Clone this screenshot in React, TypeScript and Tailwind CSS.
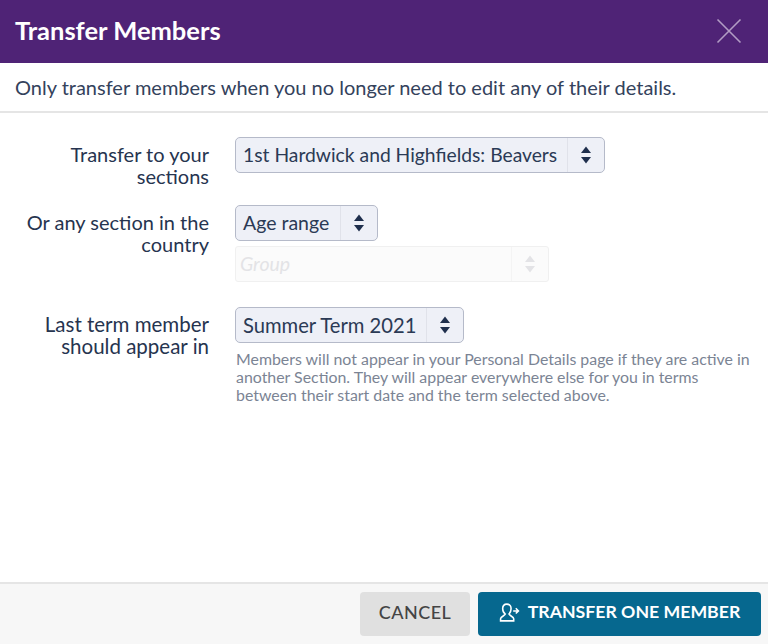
const Arrows = ({ faded }: { faded?: boolean }) => (
  <svg width="12" height="20" viewBox="0 0 12 20" className={faded ? "text-[#e3e3e6]" : "text-[#1f2f4d]"}>
    <path d="M6 1.5 L11 8 H1 Z" fill="currentColor" />
    <path d="M6 18.5 L11 12 H1 Z" fill="currentColor" />
  </svg>
);

interface SelectProps {
  label: string;
  width: string;
  textSize?: string;
}

const Select = ({ label, width, textSize = "text-[19.5px]" }: SelectProps) => (
  <div className={`${width} h-[36px] flex items-center justify-between rounded-[5px] border border-[#b5bac9] bg-[#eef0f7]`}>
    <span className={`pl-[7px] ${textSize} leading-none text-[#2b3a55] whitespace-nowrap`}>{label}</span>
    <div className="w-[37px] h-full flex items-center justify-center border-l border-[#e0e2ea]">
      <Arrows />
    </div>
  </div>
);

const Label = ({ children, textSize = "text-[20px]" }: { children: React.ReactNode; textSize?: string }) => (
  <div className={`w-[209px] shrink-0 pl-[20px] text-right ${textSize} leading-[22px] text-[#26344f]`}>{children}</div>
);

export default function App() {
  return (
    <div className="w-[768px] h-[644px] flex flex-col bg-white font-['Lato','Noto_Sans',sans-serif] overflow-hidden">
      <div className="h-[63px] shrink-0 flex items-center justify-between bg-[#4f2376] pl-[15px] pr-[26px]">
        <h1 className="text-[25.5px] font-bold text-white leading-none -mt-[2px]">Transfer Members</h1>
        <svg width="26" height="26" viewBox="0 0 26 26" className="text-[#b29cc4] -mt-[2px]">
          <path d="M1.5 1.5 L24.5 24.5 M24.5 1.5 L1.5 24.5" stroke="currentColor" strokeWidth="1.6" />
        </svg>
      </div>
      <div className="h-[50px] shrink-0 flex items-center pl-[15px] border-b-2 border-[#e5e5e5] text-[20px] text-[#34425c]">
        Only transfer members when you no longer need to edit any of their details.
      </div>
      <div className="flex-1 pt-[24px]">
        <div className="flex gap-[26px]">
          <div className="pt-[6px]"><Label>Transfer to your sections</Label></div>
          <Select label="1st Hardwick and Highfields: Beavers" width="w-[370px]" textSize="text-[19.3px]" />
        </div>
        <div className="flex gap-[26px] mt-[18px]">
          <div className="pt-[6px]"><Label>Or any section in the country</Label></div>
          <div className="flex flex-col gap-[5px]">
            <Select label="Age range" width="w-[143px]" />
            <div className="w-[314px] h-[36px] flex items-center justify-between rounded-[3px] border border-[#f0f0f0] bg-[#fbfbfb]">
              <span className="pl-[4px] text-[19.5px] italic text-[#e3e3e6]">Group</span>
              <div className="w-[37px] h-full flex items-center justify-center border-l border-[#f4f4f4]">
                <Arrows faded />
              </div>
            </div>
          </div>
        </div>
        <div className="flex gap-[26px] mt-[25px]">
          <div className="pt-[6px]"><Label textSize="text-[20.5px]">Last term member should appear in</Label></div>
          <div className="flex flex-col">
            <Select label="Summer Term 2021" width="w-[229px]" textSize="text-[20.2px]" />
            <p className="w-[520px] mt-[7px] pl-[1px] text-[15.9px] leading-[18px] text-[#7b8494]">
              Members will not appear in your Personal Details page if they are active in another Section. They will appear everywhere else for you in terms between their start date and the term selected above.
            </p>
          </div>
        </div>
      </div>
      <div className="h-[62px] shrink-0 flex items-center justify-end gap-[8px] pr-[7px] border-t-2 border-[#e5e5e5] bg-[#f7f7f7]">
        <button className="w-[110px] h-[44px] pb-[3px] rounded-[4px] bg-[#e0e0e0] text-[18px] font-medium tracking-[0.5px] text-[#444]">CANCEL</button>
        <button className="w-[283px] h-[44px] pb-[3px] flex items-center justify-center gap-[8px] rounded-[4px] bg-[#06688f] text-[17.7px] font-bold text-white">
          <svg width="21" height="21" viewBox="0 0 20 20" fill="none" stroke="currentColor" strokeWidth="1.5">
            <path d="M7.5 2 C10 2 11.5 4 11.5 6.5 C11.5 9 10.5 10.5 9.5 11.5 C10 13 14 14 14 16 V18 H1.5 V16 C1.5 14 5.5 13 6 11.5 C4.5 10.5 3.5 9 3.5 6.5 C3.5 4 5 2 7.5 2 Z" />
            <path d="M13.5 8.5 H18 M16 6 L18.5 8.5 L16 11" />
          </svg>
          TRANSFER ONE MEMBER
        </button>
      </div>
    </div>
  );
}
